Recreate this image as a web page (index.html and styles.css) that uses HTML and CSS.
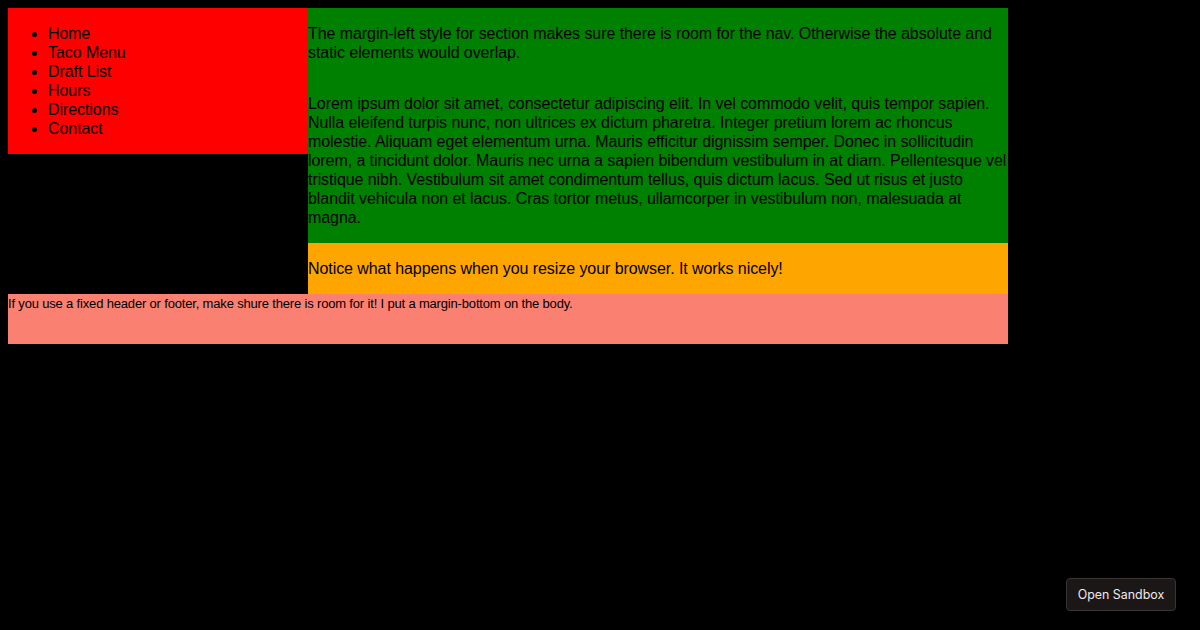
FILE: index.html
```html
<!DOCTYPE html>
<html>
<head>
<meta charset="utf-8">
<link rel="stylesheet" href="styles.css">
</head>
<body>
<div class="wrap">
  <div class="top">
    <nav class="nav">
      <ul>
        <li>Home</li>
        <li>Taco Menu</li>
        <li>Draft List</li>
        <li>Hours</li>
        <li>Directions</li>
        <li>Contact</li>
      </ul>
    </nav>
    <div class="main">
      <section class="section">
        <p class="intro">The margin-left style for section makes sure there is room for the nav. Otherwise the absolute and static elements would overlap.</p>
        <p class="lorem">Lorem ipsum dolor sit amet, consectetur adipiscing elit. In vel commodo velit, quis tempor sapien. Nulla eleifend turpis nunc, non ultrices ex dictum pharetra. Integer pretium lorem ac rhoncus molestie. Aliquam eget elementum urna. Mauris efficitur dignissim semper. Donec in sollicitudin lorem, a tincidunt dolor. Mauris nec urna a sapien bibendum vestibulum in at diam. Pellentesque vel tristique nibh. Vestibulum sit amet condimentum tellus, quis dictum lacus. Sed ut risus et justo blandit vehicula non et lacus. Cras tortor metus, ullamcorper in vestibulum non, malesuada at magna.</p>
      </section>
      <div class="notice">
        <p>Notice what happens when you resize your browser. It works nicely!</p>
      </div>
    </div>
  </div>
  <footer class="footer">If you use a fixed header or footer, make shure there is room for it! I put a margin-bottom on the body.</footer>
</div>
<button class="sandbox">Open Sandbox</button>
</body>
</html>
```
FILE: styles.css
```css
html, body {
  background: #000;
}
body {
  margin: 8px;
  font-family: "Liberation Sans", Arial, sans-serif;
  font-size: 16px;
  line-height: 19px;
  letter-spacing: -0.07px;
  color: #000;
}
.wrap {
  width: 1000px;
}
.top {
  display: flex;
  align-items: flex-start;
}
.nav {
  width: 300px;
  flex: none;
  background: #ff0000;
  display: flow-root;
}
.nav ul {
  margin: 16px 0;
  padding-left: 40px;
}
.main {
  width: 700px;
  flex: none;
}
.section {
  background: #008000;
  display: flow-root;
}
.section p {
  margin: 16px 0;
}
.section .lorem {
  margin-top: 32px;
}
.notice {
  background: #ffa500;
  display: flow-root;
}
.notice p {
  margin: 16px 0;
}
.footer {
  background: #fa8072;
  height: 50px;
  font-size: 13px;
  line-height: 19px;
  letter-spacing: -0.17px;
}
.sandbox {
  position: fixed;
  right: 24px;
  bottom: 19px;
  width: 110px;
  height: 33px;
  padding: 0;
  background: #1b1717;
  color: #f2eaea;
  border: 1px solid #3a3434;
  border-radius: 4px;
  font-family: Inter, "Liberation Sans", sans-serif;
  font-size: 12.4px;
  letter-spacing: 0;
}
```
